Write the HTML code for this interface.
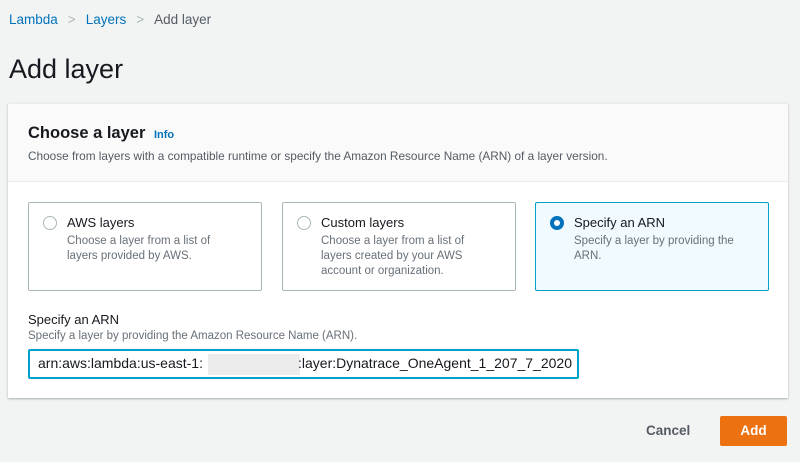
<!DOCTYPE html>
<html><head><style>
*{box-sizing:border-box;margin:0;padding:0}
body{width:800px;height:462px;background:#f2f3f3;font-family:"Liberation Sans",sans-serif;color:#16191f;position:relative;overflow:hidden}
.a{position:absolute}
.bc{top:12px;left:9px;font-size:13.5px;color:#545b64}
.bc span.l{color:#0073bb}
.bc .s{color:#aab7b8;margin:0 10px}
h1{position:absolute;top:54px;left:9px;font-size:27px;font-weight:normal;color:#16191f}
.card{left:8px;top:103px;width:780px;height:295px;background:#fff;box-shadow:0 1px 2px rgba(0,28,36,.3);border-top:1px solid #eaeded}
.hd{left:0;top:0;width:780px;height:78px;background:#fafafa;border-bottom:1px solid #eaeded}
.opt{top:98px;width:234px;height:89px;border:1px solid #aab7b8;background:#fff;border-radius:2px}
.opt.sel{border-color:#00a1c9;background:#f1faff}
.rad{position:absolute;left:14px;top:13px;width:14px;height:14px;border-radius:50%;border:1px solid #aab7b8;background:#fff}
.sel .rad{border:4px solid #0073bb}
.ot{position:absolute;left:38px;top:12px;font-size:13px;color:#16191f}
.od{position:absolute;left:38px;top:31px;font-size:11.5px;line-height:15px;color:#687078;width:165px}
</style></head><body>
<div class="a bc"><span class="l">Lambda</span><span class="s">&gt;</span><span class="l">Layers</span><span class="s">&gt;</span>Add layer</div>
<h1>Add layer</h1>
<div class="a card">
 <div class="a hd">
  <div class="a" style="left:20px;top:20px;font-size:16.5px;font-weight:bold">Choose a layer <span style="font-size:11px;color:#0073bb;margin-left:4px">Info</span></div>
  <div class="a" style="left:20px;top:45px;font-size:11.8px;color:#545b64;white-space:nowrap">Choose from layers with a compatible runtime or specify the Amazon Resource Name (ARN) of a layer version.</div>
 </div>
 <div class="a opt" style="left:20px"><div class="rad"></div><div class="ot">AWS layers</div><div class="od">Choose a layer from a list of layers provided by AWS.</div></div>
 <div class="a opt" style="left:274px"><div class="rad"></div><div class="ot">Custom layers</div><div class="od">Choose a layer from a list of layers created by your AWS account or organization.</div></div>
 <div class="a opt sel" style="left:527px"><div class="rad"></div><div class="ot">Specify an ARN</div><div class="od">Specify a layer by providing the ARN.</div></div>
 <div class="a" style="left:20px;top:208px;font-size:13px">Specify an ARN</div>
 <div class="a" style="left:20px;top:226px;font-size:11.5px;color:#687078;white-space:nowrap">Specify a layer by providing the Amazon Resource Name (ARN).</div>
 <div class="a" style="left:20px;top:245px;width:551px;height:30px;border:2px solid #00a1c9;border-radius:2px;background:#fff"></div>
 <div class="a" style="left:30px;top:251px;font-size:14px;white-space:nowrap">arn:aws:lambda:us-east-1:</div>
 <div class="a" style="left:200px;top:250px;width:92px;height:21px;background:#ececec"></div>
 <div class="a" style="left:290px;top:251px;font-size:14px;white-space:nowrap">:layer:Dynatrace_OneAgent_1_207_7_2020</div>
</div>
<div class="a" style="left:646px;top:423px;font-size:13.5px;font-weight:bold;color:#545b64">Cancel</div>
<div class="a" style="left:720px;top:416px;width:67px;height:30px;background:#ec7211;border-radius:2px;color:#fff;font-weight:bold;font-size:13.5px;text-align:center;line-height:30px">Add</div>
</body></html>
